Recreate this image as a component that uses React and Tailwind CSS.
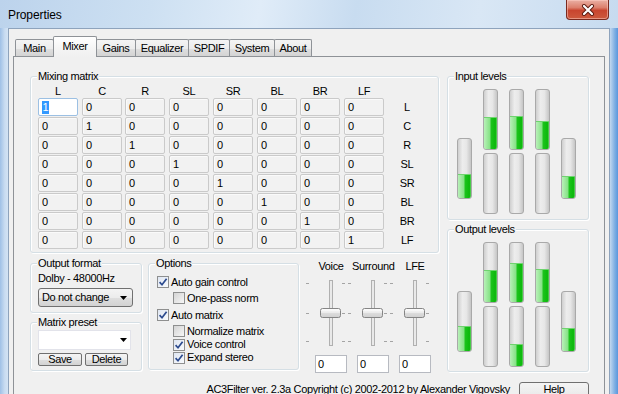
import React from "react";

const BTN_BG = "bg-[linear-gradient(#f4f4f4,#ececec_50%,#dfdfdf_51%,#d2d2d2)]";
const HEADS = ["L", "C", "R", "SL", "SR", "BL", "BR", "LF"];
const GRID = "grid grid-cols-[44px_43px_44px_44px_44px_43px_44px_40px_46px]";

function Group({ label, className, children }) {
  return (
    <div className={`border border-[#d5dfe5] rounded-[3px] shadow-[inset_1px_1px_0_#fff,1px_1px_0_#fff] ${className}`}>
      <div className="-mt-[7px] ml-[6px] px-[1px] bg-[#f0f0f0] w-fit h-[13px] leading-[13px] whitespace-nowrap">
        {label}
      </div>
      {children}
    </div>
  );
}

function Cell({ v, focus }) {
  if (focus) {
    return (
      <div className="w-[40px] h-[18px] border border-[#9cc0e3] rounded-[2px] bg-white pl-[3px] flex items-center">
        <span className="bg-[#3399ff] text-white leading-[13px] px-[0.5px]">{v}</span>
      </div>
    );
  }
  return (
    <div className="w-[40px] h-[18px] border border-[#cacaca] rounded-[2px] bg-[#f2f2f2] shadow-[inset_1px_1px_0_#fafafa] pl-[3px] leading-[16px]">
      {v}
    </div>
  );
}

function Bar({ fill }) {
  return (
    <div className="w-[15px] h-[61px] rounded-[3px] border border-[#a9a9a9] bg-[linear-gradient(to_right,#cfcfcf,#ededed_35%,#e7e7e7_65%,#c6c6c6)] flex flex-col justify-end overflow-hidden">
      {fill > 0 && (
        <div
          style={{ height: fill }}
          className="border-t border-[#6fd46f] bg-[linear-gradient(to_right,#b9f0b9,#86e286_45%,#1cc41c_55%,#0cb80c_88%,#63d463)]"
        />
      )}
    </div>
  );
}

function Levels({ side, cols }) {
  return (
    <div className="ml-[9px] mt-[6px] flex items-start gap-[11px]">
      <div className="mt-[49px]">
        <Bar fill={side[0]} />
      </div>
      {cols.map((c, i) => (
        <div key={i} className="flex flex-col gap-[3px]">
          <Bar fill={c[0]} />
          <Bar fill={c[1]} />
        </div>
      ))}
      <div className="mt-[49px]">
        <Bar fill={side[1]} />
      </div>
    </div>
  );
}

function Check({ checked, label, nested, h }) {
  return (
    <div className={`flex items-center gap-[2px] ${nested ? "pl-[24px]" : "pl-[8px]"} ${h}`}>
      <div className={`w-[12px] h-[12px] border border-[#8e8f8f] flex items-center justify-center ${checked ? "bg-[linear-gradient(135deg,#dfe6f2,#f8fafc)]" : "bg-[linear-gradient(135deg,#d4d4d4,#f6f6f6)]"}`}>
        {checked && (
          <svg width="10" height="10" viewBox="0 0 10 10">
            <path d="M1.6 5.2 L4 7.8 L8.6 1.8" fill="none" stroke="#2b4a8e" strokeWidth="1.7" />
          </svg>
        )}
      </div>
      <span className="leading-[13px] whitespace-nowrap">{label}</span>
    </div>
  );
}

function Arrow() {
  return (
    <svg width="7" height="4" viewBox="0 0 7 4" className="shrink-0">
      <path d="M0 0 H7 L3.5 4 Z" fill="#000" />
    </svg>
  );
}

function Slider({ label }) {
  return (
    <div className="w-[42px] flex flex-col">
      <div className="h-[13px] leading-[13px] text-center whitespace-nowrap">{label}</div>
      <svg width="42" height="66" viewBox="0 0 42 66" className="mt-[7px] overflow-visible">
        <defs>
          <linearGradient id={`th${label}`} x1="0" y1="0" x2="0" y2="1">
            <stop offset="0" stopColor="#fbfbfb" />
            <stop offset="0.5" stopColor="#eaeaea" />
            <stop offset="0.55" stopColor="#dcdcdc" />
            <stop offset="1" stopColor="#d0d0d0" />
          </linearGradient>
        </defs>
        <rect x="19.5" y="0.5" width="3" height="65" fill="#e9e9e9" stroke="#b0b0b0" />
        {[3.5, 33.5, 61.5].map((y) => (
          <g key={y} stroke="#a4a4a4" strokeWidth="1">
            <line x1="-4" y1={y} x2="-1" y2={y} />
            <line x1="32" y1={y} x2="35" y2={y} />
          </g>
        ))}
        <rect x="10.5" y="28.5" width="20" height="9" rx="2" fill={`url(#th${label})`} stroke="#858585" />
        <line x1="12" y1="30" x2="29" y2="30" stroke="#ffffff" strokeWidth="1" opacity="0.8" />
      </svg>
      <div className="mx-auto mt-[9px] w-[32px] h-[18px] bg-white border border-[#b7bac1] pl-[2px] leading-[16px]">0</div>
    </div>
  );
}

const TABS = [
  { t: "Main", w: "w-[39px]" },
  { t: "Mixer", w: "w-[44px]", sel: true },
  { t: "Gains", w: "w-[40px]" },
  { t: "Equalizer", w: "w-[54px]" },
  { t: "SPDIF", w: "w-[42px]" },
  { t: "System", w: "w-[46px]" },
  { t: "About", w: "w-[38px]" },
];

export default function App() {
  return (
    <div className="w-[618px] h-[394px] overflow-hidden flex flex-col font-['Liberation_Sans',Arial,sans-serif] text-[11px] tracking-[-0.35px] text-black bg-[linear-gradient(100deg,#bcd3ec_0%,#cde0f2_22%,#e0ecf8_38%,#c8dcf0_52%,#d9e7f5_70%,#bed5ed_100%)]">
      {/* Title bar */}
      <div className="h-[28px] flex items-start shrink-0">
        <div className="ml-[8px] mt-[8px] text-[12px] leading-[14px] tracking-[-0.1px]">Properties</div>
        <div className="ml-auto mr-[9px] w-[43px] h-[20px] rounded-b-[4px] border border-t-0 border-[#7a2a1f] bg-[linear-gradient(#eab0a4,#dc7f6c_40%,#c8452f_55%,#cd5a3e_100%)] shadow-[inset_0_0_0_1px_rgba(255,210,200,0.5)] flex items-center justify-center">
          <svg width="14" height="12" viewBox="0 0 14 12">
            <path d="M3 2 L11 10 M11 2 L3 10" stroke="#5a1a10" strokeWidth="4" strokeLinecap="round" />
            <path d="M3 2 L11 10 M11 2 L3 10" stroke="#ffffff" strokeWidth="2.2" strokeLinecap="round" />
          </svg>
        </div>
      </div>

      <div className="flex flex-1 min-h-0">
        <div className="w-[8px] bg-[linear-gradient(to_right,#9fc0e6,#c9dcf1_60%,#d3e3f4)]" />
        <div className="w-[602px] bg-[#f0f0f0] border-t border-l border-r border-[#8ea3bc] flex flex-col">
          {/* Tabs */}
          <div className="ml-[6px] mt-[7px] h-[21px] flex items-end shrink-0">
            {TABS.map((tab, i) =>
              tab.sel ? (
                <div
                  key={tab.t}
                  className={`${tab.w} h-[21px] -ml-px relative z-10 border border-b-0 border-[#8e9297] rounded-t-[2px] bg-[linear-gradient(#ffffff,#f4f4f4_60%,#f0f0f0)] flex items-center justify-center pb-[1px]`}
                >
                  {tab.t}
                </div>
              ) : (
                <div
                  key={tab.t}
                  className={`${tab.w} h-[18px] ${i > 0 ? "-ml-px" : ""} border border-b-0 border-[#8e9297] rounded-t-[2px] ${BTN_BG} flex items-center justify-center`}
                >
                  {tab.t}
                </div>
              )
            )}
          </div>

          {/* Panel */}
          <div className="ml-[4px] w-[592px] -mt-px flex-1 border border-[#8e9297] bg-[#f0f0f0] pl-[16px] pt-[19px]">
            <div className="flex gap-[8px]">
              {/* Left column */}
              <div className="w-[409px] flex flex-col">
                <Group label="Mixing matrix" className="h-[177px]">
                  <div className={`ml-[7px] mt-[1px] h-[14px] ${GRID}`}>
                    {HEADS.map((h) => (
                      <div key={h} className="w-[40px] text-center leading-[14px]">
                        {h}
                      </div>
                    ))}
                  </div>
                  <div className={`ml-[7px] ${GRID} gap-y-[1px]`}>
                    {HEADS.map((rh, r) => (
                      <React.Fragment key={rh}>
                        {HEADS.map((_, c) => (
                          <Cell key={c} v={r === c ? 1 : 0} focus={r === 0 && c === 0} />
                        ))}
                        <div className="text-center pt-[2px] leading-[14px]">{rh}</div>
                      </React.Fragment>
                    ))}
                  </div>
                </Group>

                <div className="mt-[10px] flex items-start">
                  <div className="w-[112px] flex flex-col gap-[9px]">
                    <Group label="Output format" className="h-[50px]">
                      <div className="ml-[7px] mt-[2px] leading-[13px]">Dolby - 48000Hz</div>
                      <div className={`ml-[7px] mt-[3px] w-[95px] h-[19px] rounded-[3px] border border-[#707070] ${BTN_BG} flex items-center pl-[3px] pr-[5px]`}>
                        <span className="leading-[13px]">Do not change</span>
                        <span className="ml-auto">
                          <Arrow />
                        </span>
                      </div>
                    </Group>
                    <Group label="Matrix preset" className="h-[49px]">
                      <div className="ml-[7px] mt-[1px] w-[93px] h-[20px] bg-white border border-[#e2e3ea] flex items-center justify-end pr-[3px]">
                        <Arrow />
                      </div>
                      <div className="ml-[7px] mt-[3px] flex gap-[3px]">
                        <div className={`w-[44px] h-[13px] rounded-[2px] border border-[#707070] ${BTN_BG} flex items-center justify-center leading-[11px]`}>Save</div>
                        <div className={`w-[43px] h-[13px] rounded-[2px] border border-[#707070] ${BTN_BG} flex items-center justify-center leading-[11px]`}>Delete</div>
                      </div>
                    </Group>
                  </div>

                  <Group label="Options" className="ml-[6px] w-[151px] h-[107px]">
                    <div className="mt-[5px]">
                      <Check checked label="Auto gain control" h="h-[14px]" />
                    </div>
                    <div className="mt-[2px]">
                      <Check nested label="One-pass norm" h="h-[14px]" />
                    </div>
                    <div className="mt-[3px]">
                      <Check checked label="Auto matrix" h="h-[14px]" />
                    </div>
                    <div className="mt-[2px]">
                      <Check nested label="Normalize matrix" h="h-[14px]" />
                    </div>
                    <Check nested checked label="Voice control" h="h-[13px]" />
                    <Check nested checked label="Expand stereo" h="h-[13px]" />
                  </Group>

                  <div className="ml-[11px] -mt-[3px] flex">
                    <Slider label="Voice" />
                    <Slider label="Surround" />
                    <Slider label="LFE" />
                  </div>
                </div>
              </div>

              {/* Right column */}
              <div className="w-[142px] flex flex-col">
                <Group label="Input levels" className="h-[144px]">
                  <Levels side={[24, 22]} cols={[[32, 0], [33, 0], [28, 0]]} />
                </Group>
                <Group label="Output levels" className="mt-[9px] h-[143px]">
                  <Levels side={[25, 23]} cols={[[32, 0], [39, 22], [33, 0]]} />
                </Group>
              </div>
            </div>

            {/* Footer */}
            <div className="w-[559px] mt-[9px] flex items-start justify-end gap-[9px]">
              <div className="mt-[1px] leading-[13px] whitespace-nowrap">
                AC3Filter ver. 2.3a Copyright (c) 2002-2012 by Alexander Vigovsky
              </div>
              <div className={`w-[70px] h-[23px] rounded-[3px] border border-[#707070] ${BTN_BG} flex items-start justify-center leading-[12px]`}>
                Help
              </div>
            </div>
          </div>
        </div>
        <div className="w-[8px] bg-[linear-gradient(to_right,#c3d8ef,#7eaee3_60%,#5b97dc)]" />
      </div>
    </div>
  );
}
